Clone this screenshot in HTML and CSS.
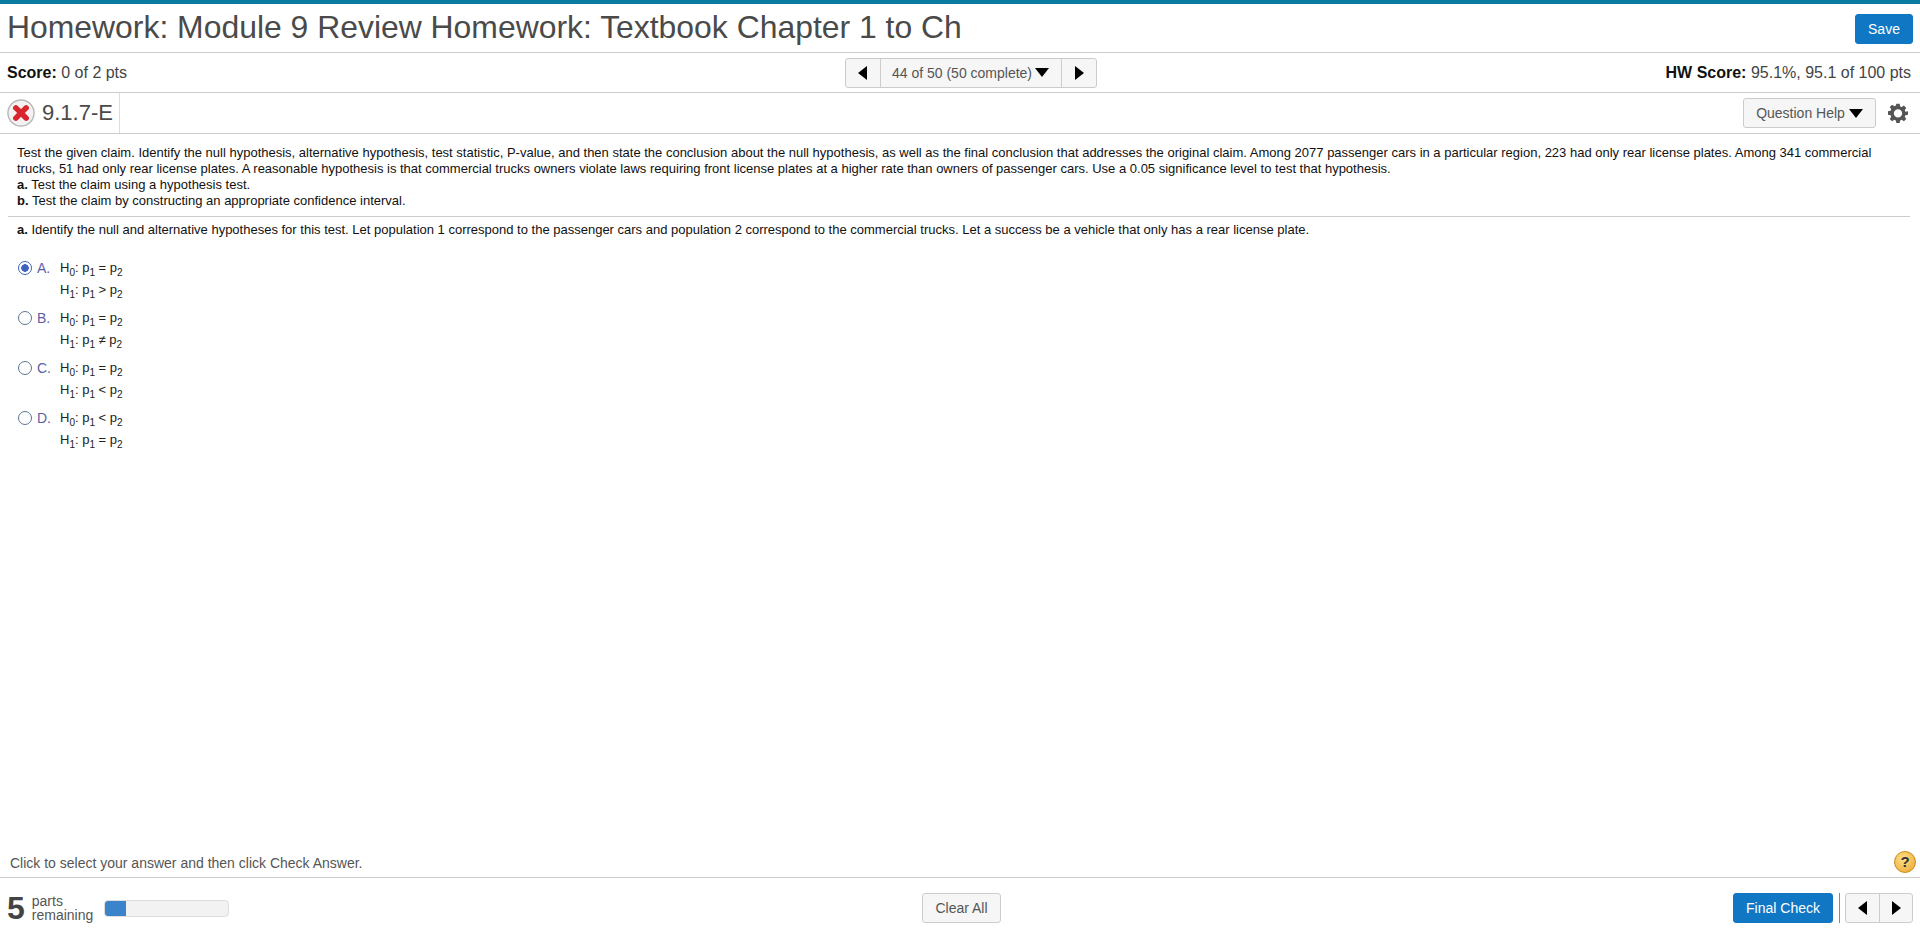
FILE: index.html
```html
<!DOCTYPE html>
<html lang="en">
<head>
<meta charset="utf-8">
<title>Homework</title>
<link rel="stylesheet" href="styles.css">
</head>
<body>
<div class="page">
  <header class="titlebar">
    <h1 class="title">Homework: Module 9 Review Homework: Textbook Chapter 1 to Ch</h1>
    <button class="btn btn-primary btn-save">Save</button>
  </header>
  <div class="scorebar">
    <div class="score"><b>Score:</b> 0 of 2 pts</div>
    <div class="pager">
      <span class="pager-arrow"><svg width="10" height="14" viewBox="0 0 10 14"><path d="M9 0v14L0 7z"/></svg></span>
      <span class="pager-label">44 of 50 (50 complete) <svg class="caret" width="14" height="9" viewBox="0 0 14 9"><path d="M0 0h14L7 9z"/></svg></span>
      <span class="pager-arrow"><svg width="10" height="14" viewBox="0 0 10 14"><path d="M1 0v14l9-7z"/></svg></span>
    </div>
    <div class="hwscore"><b>HW Score:</b> 95.1%, 95.1 of 100 pts</div>
  </div>
  <div class="questionbar">
    <div class="qid">
      <svg class="xicon" width="28" height="28" viewBox="0 0 30 30"><circle cx="15" cy="15" r="14" fill="#f4f1f1" stroke="#b8b8b8" stroke-width="1.5"/><path d="M9.500 9.500L20.500 20.500M20.500 9.500L9.500 20.500" stroke="#d9262e" stroke-width="6" stroke-linecap="round"/></svg>
      <span class="qnum">9.1.7-E</span>
    </div>
    <div class="qtools">
      <button class="btn btn-help">Question Help <svg class="caret" width="14" height="9" viewBox="0 0 14 9"><path d="M0 0h14L7 9z"/></svg></button>
      <svg class="gear" width="20" height="20" viewBox="0 0 24 24"><path fill="#555" fill-rule="evenodd" d="M10 1h4l.6 3.100 1.900.8L19.100 3.100l2.800 2.800-1.800 2.600.8 1.900L24 10v4l-3.100.6-.8 1.900 1.800 2.600-2.800 2.800-2.600-1.800-1.900.8L14 24h-4l-.6-3.100-1.900-.8-2.600 1.800-2.800-2.800 1.800-2.600-.8-1.900L0 14v-4l3.100-.6.8-1.900-1.800-2.600 2.800-2.800 2.600 1.800 1.900-.8zM12 7.500a5 5 0 1 0 0 10 5 5 0 0 0 0-10z"/></svg>
    </div>
  </div>
  <main class="content">
    <div class="prompt">
      <p>Test the given claim. Identify the null hypothesis, alternative hypothesis, test statistic, P-value, and then state the conclusion about the null hypothesis, as well as the final conclusion that addresses the original claim. Among 2077 passenger cars in a particular region, 223 had only rear license plates. Among 341 commercial trucks, 51 had only rear license plates. A reasonable hypothesis is that commercial trucks owners violate laws requiring front license plates at a higher rate than owners of passenger cars. Use a 0.05 significance level to test that hypothesis.</p>
      <p><b>a.</b> Test the claim using a hypothesis test.</p>
      <p><b>b.</b> Test the claim by constructing an appropriate confidence interval.</p>
    </div>
    <div class="part">
      <p><b>a.</b> Identify the null and alternative hypotheses for this test. Let population 1 correspond to the passenger cars and population 2 correspond to the commercial trucks. Let a success be a vehicle that only has a rear license plate.</p>
    </div>
    <ul class="options">
      <li class="option">
        <span class="radio checked"></span><span class="letter">A.</span>
        <div class="eq"><div>H<sub>0</sub>: p<sub>1</sub> = p<sub>2</sub></div><div>H<sub>1</sub>: p<sub>1</sub> &gt; p<sub>2</sub></div></div>
      </li>
      <li class="option">
        <span class="radio"></span><span class="letter">B.</span>
        <div class="eq"><div>H<sub>0</sub>: p<sub>1</sub> = p<sub>2</sub></div><div>H<sub>1</sub>: p<sub>1</sub> ≠ p<sub>2</sub></div></div>
      </li>
      <li class="option">
        <span class="radio"></span><span class="letter">C.</span>
        <div class="eq"><div>H<sub>0</sub>: p<sub>1</sub> = p<sub>2</sub></div><div>H<sub>1</sub>: p<sub>1</sub> &lt; p<sub>2</sub></div></div>
      </li>
      <li class="option">
        <span class="radio"></span><span class="letter">D.</span>
        <div class="eq"><div>H<sub>0</sub>: p<sub>1</sub> &lt; p<sub>2</sub></div><div>H<sub>1</sub>: p<sub>1</sub> = p<sub>2</sub></div></div>
      </li>
    </ul>
  </main>
  <div class="hintbar">
    <span class="hint">Click to select your answer and then click Check Answer.</span>
    <span class="helpball">?</span>
  </div>
  <footer class="footer">
    <div class="parts">
      <span class="parts-num">5</span>
      <span class="parts-label">parts<br>remaining</span>
      <span class="progress"><span class="progress-fill"></span></span>
    </div>
    <button class="btn btn-clear">Clear All</button>
    <div class="actions">
      <button class="btn btn-primary btn-final">Final Check</button>
      <span class="divider"></span>
      <div class="footnav">
        <span class="pager-arrow"><svg width="10" height="14" viewBox="0 0 10 14"><path d="M9 0v14L0 7z"/></svg></span>
        <span class="pager-arrow"><svg width="10" height="14" viewBox="0 0 10 14"><path d="M1 0v14l9-7z"/></svg></span>
      </div>
    </div>
  </footer>
</div>
</body>
</html>
```
FILE: styles.css
```css
* { box-sizing: border-box; }
html, body { margin: 0; height: 100%; }
body { font-family: "Liberation Sans", Arial, sans-serif; color: #111; background: #fff; overflow: hidden; }
p { margin: 0; }
.page { height: 938px; display: flex; flex-direction: column; border-top: 4px solid #0a7a9f; }

.titlebar { height: 49px; flex: none; display: flex; align-items: center; justify-content: space-between; padding: 0 7px 0 7px; border-bottom: 1px solid #ccc; }
.title { margin: 0 0 2px; font-size: 31.9px; font-weight: 400; color: #4a4a4a; white-space: nowrap; }
.btn { font-family: inherit; font-size: 14px; border-radius: 3px; border: 1px solid #ccc; background: #f6f6f6; color: #555; padding: 0; cursor: pointer; }
.btn-primary { background: #0f77c4; border-color: #0f77c4; color: #fff; }
.btn-save { width: 58px; height: 30px; margin-top: 2px; }

.scorebar { height: 40px; flex: none; display: grid; grid-template-columns: 1fr auto 1fr; align-items: center; padding: 0 9px 0 7px; border-bottom: 1px solid #ccc; font-size: 16px; color: #444; }
.scorebar b { color: #111; }
.hwscore { text-align: right; }
.pager { display: flex; height: 30px; margin-left: 23px; border: 1px solid #ccc; border-radius: 3px; background: #f6f6f6; }
.pager-arrow { width: 34px; display: flex; align-items: center; justify-content: center; }
.pager-label { width: 182px; font-size: 14px; color: #555; display: flex; align-items: center; justify-content: center; gap: 3px; border-left: 1px solid #ccc; border-right: 1px solid #ccc; }
.caret { flex: none; }

.questionbar { height: 41px; flex: none; display: flex; align-items: center; justify-content: space-between; padding: 0 12px 0 7px; border-bottom: 1px solid #ccc; }
.qid { display: flex; align-items: center; gap: 7px; height: 100%; padding-right: 6px; border-right: 1px solid #ddd; }
.qnum { font-size: 22px; color: #4a4a4a; }
.qtools { display: flex; align-items: center; gap: 12px; }
.btn-help { width: 133px; height: 30px; display: flex; align-items: center; justify-content: center; gap: 4px; }

.content { flex: 1; padding: 11px 10px 0 17px; font-size: 13px; line-height: 16px; color: #111; }
.prompt { padding-bottom: 7px; border-bottom: 1px solid #ccc; margin-left: -9px; padding-left: 9px; }
.part { padding-top: 5px; }
.options { list-style: none; margin: 20px 0 0; padding: 0; }
.option { display: flex; height: 50px; align-items: flex-start; font-size: 13px; }
.radio { width: 14px; height: 14px; margin: 3px 5px 0 1px; border: 1px solid #5b7692; border-radius: 50%; flex: none; background: #fff; }
.radio.checked { background: radial-gradient(circle, #3f62c0 0 3.5px, #fff 4px); border-color: #3f62c0; }
.letter { width: 23px; flex: none; color: #5b5fa8; font-size: 14px; line-height: 20px; }
.eq { line-height: 22px; color: #222; margin-top: -1px; }
.eq sub { font-size: 10px; line-height: 0; vertical-align: -4px; }

.hintbar { height: 32px; flex: none; display: flex; align-items: center; justify-content: space-between; padding: 2px 4px 0 10px; border-bottom: 1px solid #ccc; }
.hint { font-size: 14px; color: #555; }
.helpball { width: 22px; height: 22px; margin-top: -2px; border-radius: 50%; background: radial-gradient(circle at 40% 35%, #fde08a, #e8a52b); border: 1px solid #c98c1c; font-size: 15px; font-weight: 700; color: #333; display: flex; align-items: center; justify-content: center; }

.footer { height: 60px; flex: none; display: grid; grid-template-columns: 1fr auto 1fr; align-items: center; padding: 0 7px 0 7px; }
.parts { display: flex; align-items: center; }
.parts-num { font-size: 32px; font-weight: 700; color: #444; line-height: 1; }
.parts-label { font-size: 14px; line-height: 14px; color: #555; margin-left: 7px; }
.progress { width: 125px; height: 17px; margin-left: 11px; background: #f2f2f2; border: 1px solid #ddd; border-radius: 4px; overflow: hidden; display: block; }
.progress-fill { display: block; width: 21px; height: 100%; background: #3b84cc; }
.btn-clear { width: 79px; height: 30px; margin-left: 3px; }
.actions { display: flex; align-items: center; justify-content: flex-end; }
.btn-final { width: 100px; height: 30px; }
.divider { width: 1px; height: 30px; background: #888; margin: 0 5px 0 6px; }
.footnav { display: flex; height: 30px; border: 1px solid #ccc; border-radius: 3px; background: #f6f6f6; }
.footnav .pager-arrow { width: 33px; }
.footnav .pager-arrow + .pager-arrow { border-left: 1px solid #ccc; }
```
